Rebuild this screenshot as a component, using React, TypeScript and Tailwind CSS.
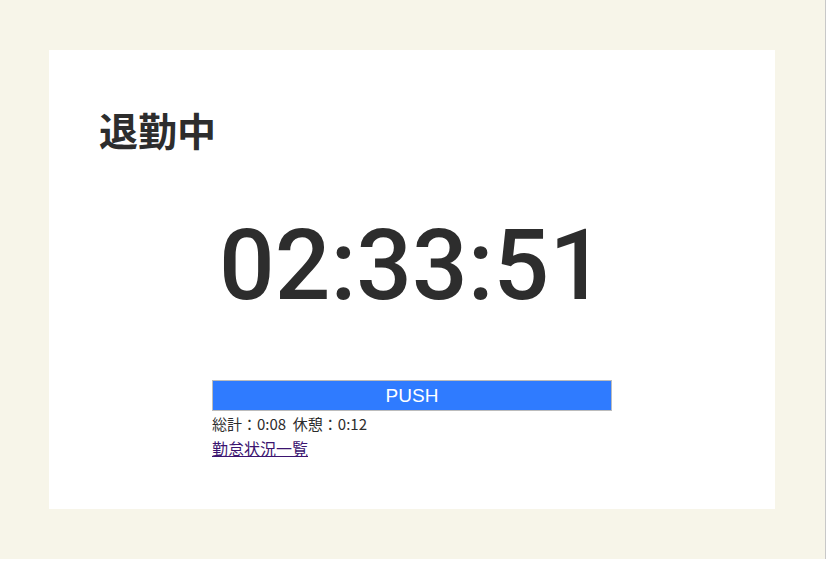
export default function App() {
  return (
    <div className="flex h-[568px] w-[827px] flex-col bg-white">
      <div className="flex h-[559px] w-[826px] border-r border-[#c8c8c8] bg-[#f7f5e9] pl-[49px] pt-[50px]">
        <div
          className="flex h-[459px] w-[726px] flex-col bg-white text-[#2d2d2d]"
          style={{ fontFamily: '"Noto Sans CJK JP", "Liberation Sans", sans-serif' }}
        >
          <h1 className="ml-[50px] mt-[53px] text-[39px] font-bold leading-[52px]">退勤中</h1>

          <div
            className="mt-[56px] text-center text-[98px] font-medium leading-[110px]"
            style={{ fontFamily: 'Roboto, "Liberation Sans", sans-serif' }}
          >
            02:33:51
          </div>

          <div className="ml-[163px] mt-[59px] flex w-[400px] flex-col">
            <button
              className="h-[31px] w-[400px] border border-[#bcbcbc] bg-[#2f7bff] text-[19px] leading-[28px] text-white"
              style={{ fontFamily: '"Liberation Sans", sans-serif' }}
            >
              PUSH
            </button>
            <div className="mt-[2px] text-[15px] leading-[22px]">総計：0:08&nbsp;&nbsp;休憩：0:12</div>
            <a href="#" className="mt-[2px] self-start text-[16px] leading-[22px] text-[#3b1470] underline">
              勤怠状況一覧
            </a>
          </div>
        </div>
      </div>
    </div>
  );
}
